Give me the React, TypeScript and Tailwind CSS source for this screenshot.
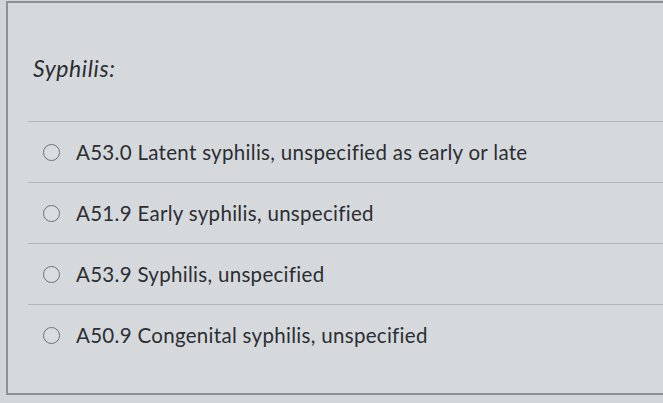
import React from "react";

const OPTIONS = [
  "A53.0 Latent syphilis, unspecified as early or late",
  "A51.9 Early syphilis, unspecified",
  "A53.9 Syphilis, unspecified",
  "A50.9 Congenital syphilis, unspecified",
];

export default function App() {
  return (
    <div
      className="w-[663px] h-[403px] overflow-hidden bg-[#d3d6d9] pt-[1px]"
      style={{ fontFamily: "Lato, 'Open Sans', sans-serif" }}
    >
      <div className="ml-[6px] h-[394px] border-t-[2px] border-l-[2px] border-b-[2px] border-[#8d9196] bg-[#d6d9dc]">
        {/* Question title */}
        <div className="pl-[25px] pt-[51px] text-[23px] leading-[28px] tracking-[0.6px] italic text-[#2a2d31]">
          Syphilis:
        </div>

        {/* Options */}
        <div className="ml-[20px] mt-[39px]">
          {OPTIONS.map((label) => (
            <label
              key={label}
              className="flex items-center gap-[16px] h-[61px] pl-[15px] border-t-[1.5px] border-[#b2b6bb] cursor-pointer"
            >
              <span className="w-[17px] h-[17px] rounded-full border-[1.5px] border-[#6c7075] bg-[#dadde0] shrink-0" />
              <span className="text-[20.5px] leading-[24px] tracking-[0.3px] text-[#2b2e33]">{label}</span>
            </label>
          ))}
        </div>
      </div>
    </div>
  );
}
